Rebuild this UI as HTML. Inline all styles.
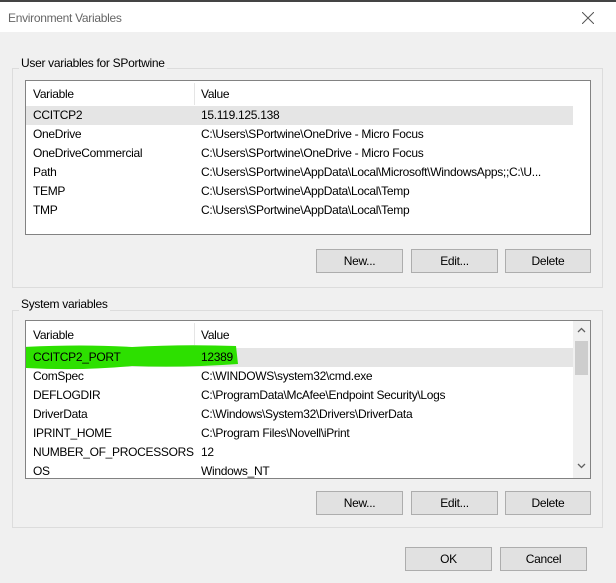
<!DOCTYPE html>
<html><head><style>
body{margin:0;width:616px;height:583px;background:#f0f0f0;font-family:"Liberation Sans",sans-serif;font-size:12px;letter-spacing:-0.3px;color:#000;position:relative;overflow:hidden}
.a{position:absolute}
.title{left:0;top:0;width:616px;height:32px;background:#fff;border-top:2px solid #444;box-sizing:border-box}
.grp{border:1px solid #dcdcdc;box-sizing:border-box}
.lbl{background:#f0f0f0;padding:0 2px}
.list{background:#fff;border:1px solid #828282;box-sizing:border-box;overflow:hidden}
.row{position:absolute;left:0;height:19px;line-height:19px;width:547px}
.row span{position:absolute}
.btn{background:#e1e1e1;border:1px solid #adadad;box-sizing:border-box;text-align:center;line-height:22px}
</style></head><body>
<div class="a title"><span class="a" style="left:8px;top:9px;color:#666">Environment Variables</span>
<svg class="a" style="left:582px;top:10px" width="12" height="12"><path d="M0 0L12 12M12 0L0 12" stroke="#555" stroke-width="1"/></svg></div>

<div class="a grp" style="left:12px;top:68px;width:591px;height:220px"></div>
<span class="a lbl" style="left:19px;top:56px">User variables for SPortwine</span>
<div class="a list" style="left:25px;top:80px;width:566px;height:155px">
 <div class="a" style="left:168px;top:2px;width:1px;height:22px;background:#e5e5e5"></div>
 <div class="row" style="top:4px"><span style="left:7px">Variable</span><span style="left:175px">Value</span></div>
 <div class="row" style="top:25px;background:#e5e5e5"><span style="left:7px">CCITCP2</span><span style="left:175px">15.119.125.138</span></div>
 <div class="row" style="top:44px"><span style="left:7px">OneDrive</span><span style="left:175px">C:\Users\SPortwine\OneDrive - Micro Focus</span></div>
 <div class="row" style="top:63px"><span style="left:7px">OneDriveCommercial</span><span style="left:175px">C:\Users\SPortwine\OneDrive - Micro Focus</span></div>
 <div class="row" style="top:82px"><span style="left:7px">Path</span><span style="left:175px">C:\Users\SPortwine\AppData\Local\Microsoft\WindowsApps;;C:\U...</span></div>
 <div class="row" style="top:101px"><span style="left:7px">TEMP</span><span style="left:175px">C:\Users\SPortwine\AppData\Local\Temp</span></div>
 <div class="row" style="top:120px"><span style="left:7px">TMP</span><span style="left:175px">C:\Users\SPortwine\AppData\Local\Temp</span></div>
</div>
<div class="a btn" style="left:316px;top:249px;width:87px;height:24px">New...</div>
<div class="a btn" style="left:411px;top:249px;width:87px;height:24px">Edit...</div>
<div class="a btn" style="left:505px;top:249px;width:86px;height:24px">Delete</div>

<div class="a grp" style="left:12px;top:310px;width:591px;height:218px"></div>
<span class="a lbl" style="left:19px;top:297px">System variables</span>
<div class="a list" style="left:25px;top:320px;width:566px;height:159px">
 <div class="a" style="left:168px;top:2px;width:1px;height:22px;background:#e5e5e5"></div>
 <div class="a" style="left:547px;top:0;width:17px;height:157px;background:#f0f0f0"></div>
 <div class="a" style="left:549px;top:20px;width:13px;height:34px;background:#cdcdcd"></div>
 <svg class="a" style="left:551px;top:6px" width="9" height="6"><path d="M1 5L4.5 1.5L8 5" stroke="#606060" fill="none" stroke-width="1.3"/></svg>
 <svg class="a" style="left:551px;top:142px" width="9" height="6"><path d="M1 1L4.5 4.5L8 1" stroke="#606060" fill="none" stroke-width="1.3"/></svg>
 <div class="row" style="top:5px"><span style="left:7px">Variable</span><span style="left:175px">Value</span></div>
 <div class="row" style="top:27px;background:#e5e5e5"></div>
 <svg class="a" style="left:-4px;top:23px" width="222" height="28"><path d="M2 3 Q60 0 110 3 Q160 0 214 2 L216 20 Q160 24 110 22 Q60 27 4 24 Z" fill="#2de000"/></svg>
 <div class="row" style="top:27px"><span style="left:7px">CCITCP2_PORT</span><span style="left:175px">12389</span></div>
 <div class="row" style="top:46px"><span style="left:7px">ComSpec</span><span style="left:175px">C:\WINDOWS\system32\cmd.exe</span></div>
 <div class="row" style="top:65px"><span style="left:7px">DEFLOGDIR</span><span style="left:175px">C:\ProgramData\McAfee\Endpoint Security\Logs</span></div>
 <div class="row" style="top:84px"><span style="left:7px">DriverData</span><span style="left:175px">C:\Windows\System32\Drivers\DriverData</span></div>
 <div class="row" style="top:103px"><span style="left:7px">IPRINT_HOME</span><span style="left:175px">C:\Program Files\Novell\iPrint</span></div>
 <div class="row" style="top:122px"><span style="left:7px">NUMBER_OF_PROCESSORS</span><span style="left:175px">12</span></div>
 <div class="row" style="top:141px"><span style="left:7px">OS</span><span style="left:175px">Windows_NT</span></div>
</div>
<div class="a btn" style="left:316px;top:491px;width:87px;height:24px">New...</div>
<div class="a btn" style="left:411px;top:491px;width:87px;height:24px">Edit...</div>
<div class="a btn" style="left:505px;top:491px;width:86px;height:24px">Delete</div>

<div class="a btn" style="left:405px;top:547px;width:87px;height:24px">OK</div>
<div class="a btn" style="left:500px;top:547px;width:87px;height:24px">Cancel</div>
</body></html>
